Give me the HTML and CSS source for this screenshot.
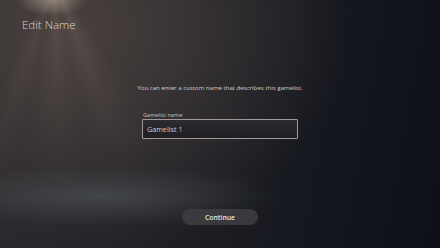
FILE: index.html
```html
<!DOCTYPE html>
<html lang="en">

<head>
    <meta charset="UTF-8">
    <meta name="viewport" content="width=device-width, initial-scale=1.0">
    <title>Edit Name</title>
    <link rel="stylesheet" href="styles.css">
</head>

<body>
    <div class="screen">
        <div class="beams"></div>
        <h1 class="title">Edit Name</h1>

        <div class="content">
            <p class="hint">You can enter a custom name that describes this gamelist.</p>

            <div class="field">
                <label class="field-label" for="gamelistName">Gamelist name</label>
                <input class="field-input" type="text" id="gamelistName" value="Gamelist 1">
            </div>
        </div>

        <div class="actions">
            <button class="btn">Continue</button>
        </div>
    </div>
</body>

</html>
```

FILE: styles.css
```css
* {
    box-sizing: border-box;
}

body {
    margin: 0;
    font-family: "Open Sans", "Noto Sans", sans-serif;
    background-color: #13151c;
}

.screen {
    position: relative;
    width: 440px;
    height: 248px;
    overflow: hidden;
    display: flex;
    flex-direction: column;
    background:
        radial-gradient(ellipse 180px 30px at 100px 196px, rgba(80, 86, 90, 0.6), rgba(80, 86, 90, 0) 100%),
        radial-gradient(ellipse 280px 220px at 70px 30px, rgba(76, 67, 64, 0.9), rgba(40, 38, 42, 0) 100%),
        linear-gradient(100deg, #2b2a2e 0%, #232328 35%, #16181f 70%, #0e1018 100%);
}

/* soft light shining down from the top left */
.beams {
    position: absolute;
    left: 0;
    top: 0;
    width: 300px;
    height: 200px;
    background:
        radial-gradient(ellipse 36px 16px at 52px 0px, rgba(190, 172, 155, 0.6), rgba(190, 172, 155, 0) 100%),
        conic-gradient(from 145deg at 55px -20px,
            rgba(150, 130, 118, 0) 0deg,
            rgba(150, 130, 118, 0.2) 14deg,
            rgba(150, 130, 118, 0.07) 24deg,
            rgba(150, 130, 118, 0.19) 34deg,
            rgba(150, 130, 118, 0.04) 46deg,
            rgba(150, 130, 118, 0.13) 54deg,
            rgba(150, 130, 118, 0) 64deg,
            rgba(150, 130, 118, 0) 360deg);
    -webkit-mask-image: radial-gradient(ellipse 240px 190px at 55px 0px, #000 15%, transparent 100%);
    mask-image: radial-gradient(ellipse 240px 190px at 55px 0px, #000 15%, transparent 100%);
    pointer-events: none;
}

.title {
    position: relative;
    margin: 0;
    padding: 16px 0 0 22px;
    font-size: 11.5px;
    font-weight: 300;
    color: #d8d5d3;
    line-height: 18px;
}

.content {
    position: relative;
    display: flex;
    flex-direction: column;
    align-items: center;
    padding-top: 49px;
}

.hint {
    margin: 0;
    font-size: 6.1px;
    color: #cfcfd2;
    line-height: 10px;
}

.field {
    margin-top: 19px;
    width: 156px;
    display: flex;
    flex-direction: column;
}

.field-label {
    font-size: 5.6px;
    color: #c4c2c2;
    padding-left: 1px;
    line-height: 7px;
}

.field-input {
    height: 20px;
    margin: 0;
    padding: 0 4px;
    font-family: inherit;
    font-size: 7.2px;
    color: #cdcbcb;
    background: linear-gradient(180deg, #2d2b30 0%, #1f1e22 100%);
    border: 1px solid #a39896;
    border-radius: 1px;
    outline: none;
}

.actions {
    position: relative;
    margin-top: auto;
    padding-bottom: 23px;
    display: flex;
    justify-content: center;
}

.btn {
    width: 76px;
    height: 16px;
    padding: 0;
    font-family: inherit;
    font-size: 6.8px;
    font-weight: 600;
    color: #e6e6e8;
    background-color: #39393e;
    border: none;
    border-radius: 8px;
    cursor: pointer;
}
```
